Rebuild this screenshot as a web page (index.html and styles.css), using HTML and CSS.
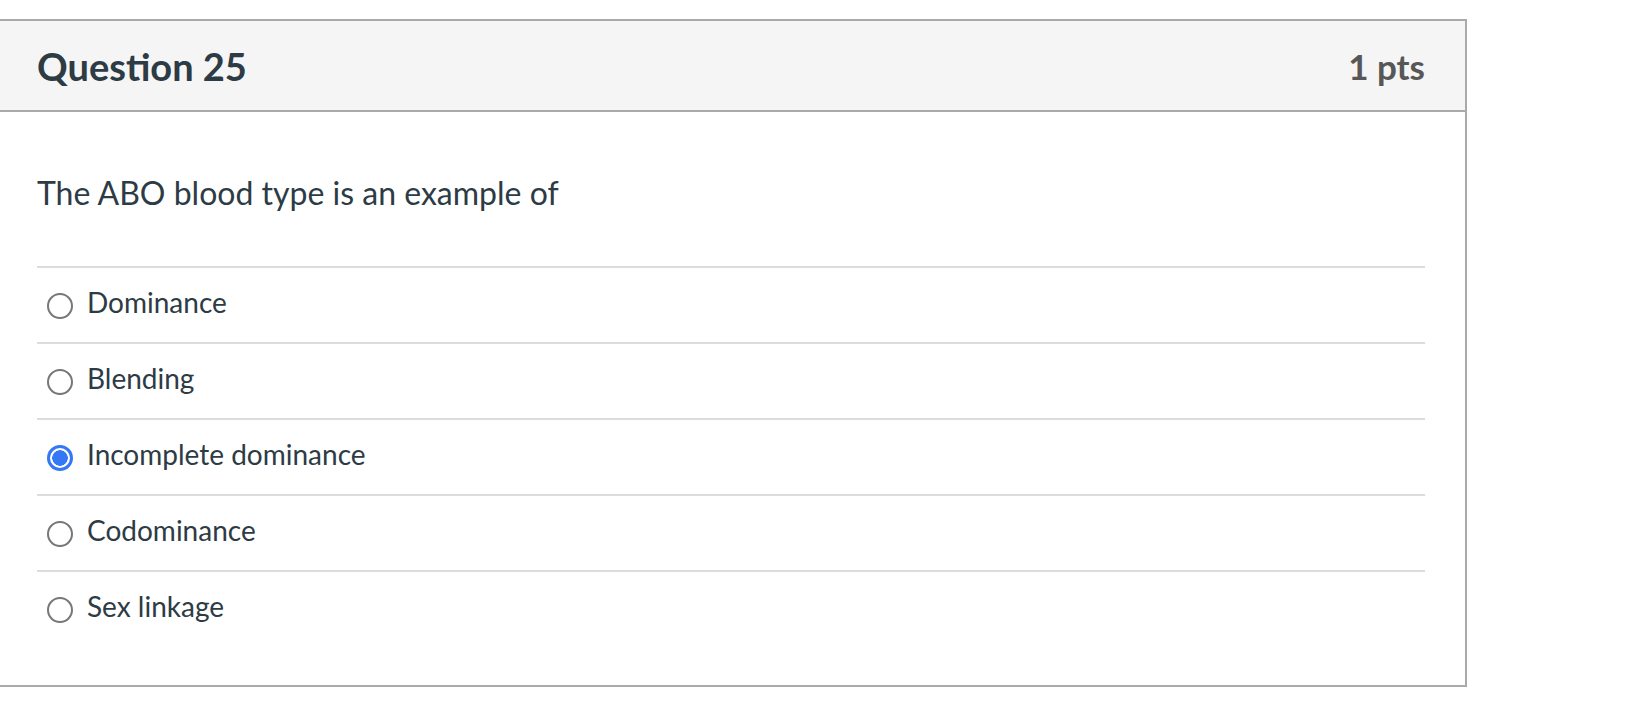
FILE: index.html
```html
<!DOCTYPE html>
<html lang="en">
<head>
<meta charset="utf-8">
<title>Question 25</title>
<link rel="stylesheet" href="styles.css">
</head>
<body>
<div class="question">
  <div class="header">
    <h2 class="title">Question 25</h2>
    <span class="pts">1 pts</span>
  </div>
  <div class="content">
    <p class="text">The ABO blood type is an example of</p>
    <div class="answers">
      <label class="answer"><span class="radio"></span><span class="label">Dominance</span></label>
      <label class="answer"><span class="radio"></span><span class="label">Blending</span></label>
      <label class="answer"><span class="radio checked"></span><span class="label">Incomplete dominance</span></label>
      <label class="answer"><span class="radio"></span><span class="label">Codominance</span></label>
      <label class="answer"><span class="radio"></span><span class="label">Sex linkage</span></label>
    </div>
  </div>
</div>
</body>
</html>
```
FILE: styles.css
```css
html, body {
  margin: 0;
  padding: 0;
  background: #ffffff;
}
body {
  font-family: Lato, "Open Sans", sans-serif;
  color: #2d3b45;
}
.question {
  margin-top: 19px;
  width: 1467px;
  box-sizing: border-box;
  border: 2px solid #aaaaaa;
  border-left: 0;
}
.header {
  display: flex;
  align-items: center;
  justify-content: space-between;
  height: 89px;
  padding: 0 40px 0 37px;
  background: #f5f5f5;
  border-bottom: 2px solid #aaaaaa;
}
.title {
  margin: 0;
  font-size: 38px;
  font-weight: 700;
  color: #2d3b45;
}
.pts {
  font-size: 35px;
  font-weight: 700;
  color: #575757;
}
.content {
  padding: 60px 40px 39px 37px;
}
.text {
  margin: 0 0 52px;
  font-size: 32px;
  line-height: 42px;
}
.answer {
  display: flex;
  align-items: flex-start;
  border-top: 2px solid #dcdcdc;
  padding: 13px 0 19px 10px;
  font-size: 28px;
  line-height: 42px;
}
.radio {
  flex: none;
  width: 26px;
  height: 26px;
  margin-top: 12px;
  margin-right: 14px;
  box-sizing: border-box;
  border: 2px solid #777777;
  border-radius: 50%;
  background: #ffffff;
}
.radio.checked {
  border: 3px solid #3478f6;
  background: radial-gradient(circle, #3478f6 0, #3478f6 7.5px, #ffffff 8px);
}
```
